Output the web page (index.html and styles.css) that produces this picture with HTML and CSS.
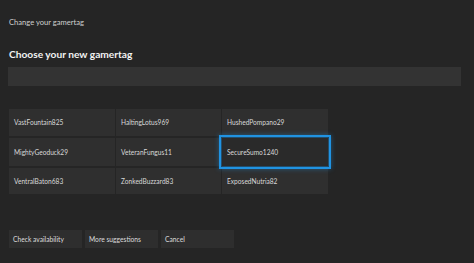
FILE: index.html
```html
<!DOCTYPE html>
<html>
<head>
<meta charset="utf-8">
<link rel="stylesheet" href="styles.css">
</head>
<body>
<div class="page">
  <div class="crumb">Change your gamertag</div>
  <h1 class="heading">Choose your new gamertag</h1>
  <div class="input"></div>
  <div class="grid">
    <div class="tile">VastFountain825</div>
    <div class="tile">HaltingLotus969</div>
    <div class="tile">HushedPompano29</div>
    <div class="tile">MightyGeoduck29</div>
    <div class="tile">VeteranFungus11</div>
    <div class="tile selected">SecureSumo1240</div>
    <div class="tile">VentralBaton683</div>
    <div class="tile">ZonkedBuzzard83</div>
    <div class="tile">ExposedNutria82</div>
  </div>
  <div class="actions">
    <div class="btn">Check availability</div>
    <div class="btn">More suggestions</div>
    <div class="btn">Cancel</div>
  </div>
</div>
</body>
</html>
```
FILE: styles.css
```css
html, body {
  margin: 0;
  padding: 0;
  background: #252525;
  width: 474px;
  height: 263px;
  overflow: hidden;
}
.page {
  display: flex;
  flex-direction: column;
  padding: 16px 0 0 9px;
  font-family: Lato, "Open Sans", sans-serif;
  color: #dcdcdc;
}
.crumb {
  font-size: 7.6px;
  line-height: 12px;
  color: #cfcfcf;
}
.heading {
  margin: 19px 0 0 0;
  font-size: 10.2px;
  line-height: 14px;
  font-weight: 700;
  color: #f2f2f2;
}
.input {
  margin: 6px 0 0 -1px;
  width: 453px;
  height: 19px;
  background: #333333;
}
.grid {
  margin-top: 23px;
  display: grid;
  grid-template-columns: 106px 105px 106px;
  grid-template-rows: 27px 28px 26px;
  column-gap: 1px;
  row-gap: 2px;
}
.tile {
  background: #2f2f2f;
  font-size: 6.6px;
  line-height: 1;
  padding-left: 5px;
  display: flex;
  align-items: center;
  color: #d8d8d8;
}
.tile.selected {
  outline: 2px solid #2093e2;
  outline-offset: 1px;
  box-shadow: 0 0 5px 3px rgba(32, 147, 226, 0.45);
  position: relative;
  background: #2a2a2a;
}
.actions {
  margin-top: 36px;
  display: flex;
  gap: 3px;
}
.btn {
  width: 69px;
  height: 18px;
  padding-left: 4px;
  background: #2e2e2e;
  font-size: 6.7px;
  display: flex;
  align-items: center;
  color: #dcdcdc;
}
```
